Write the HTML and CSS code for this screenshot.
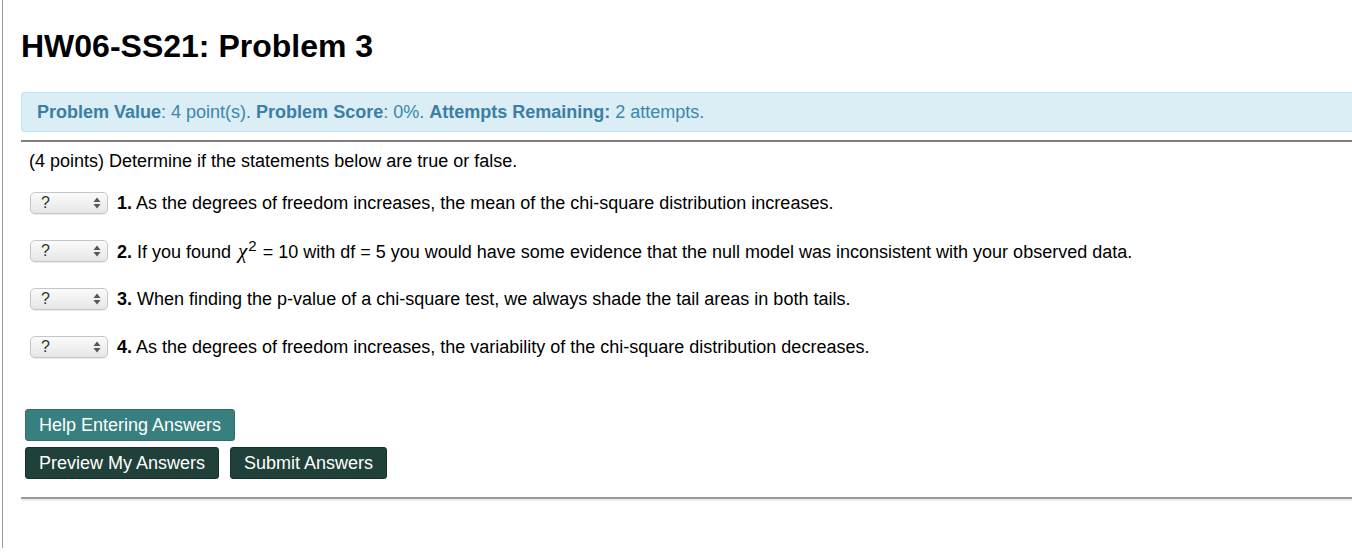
FILE: index.html
```html
<!DOCTYPE html>
<html>
<head>
<meta charset="utf-8">
<link rel="stylesheet" href="styles.css">
</head>
<body>
<div class="page">
  <div class="content">
    <h1 class="title">HW06-SS21: Problem 3</h1>
    <div class="info">
      <b>Problem Value</b>: 4 point(s). <b>Problem Score</b>: 0%. <b>Attempts Remaining:</b> 2 attempts.
    </div>
    <div class="rule"></div>
    <p class="intro">(4 points) Determine if the statements below are true or false.</p>
    <div class="items">
      <div class="item">
        <div class="select"><span class="q">?</span><span class="arrows"><svg width="8" height="12" viewBox="0 0 8 12"><path d="M4 0.5 L7.5 5 H0.5 Z M4 11.5 L7.5 7 H0.5 Z" fill="#555"/></svg></span></div>
        <span class="stmt"><b>1.</b> As the degrees of freedom increases, the mean of the chi-square distribution increases.</span>
      </div>
      <div class="item">
        <div class="select"><span class="q">?</span><span class="arrows"><svg width="8" height="12" viewBox="0 0 8 12"><path d="M4 0.5 L7.5 5 H0.5 Z M4 11.5 L7.5 7 H0.5 Z" fill="#555"/></svg></span></div>
        <span class="stmt"><b>2.</b> If you found <span class="math"><i class="chi">χ</i><sup>2</sup></span> = 10 with df = 5 you would have some evidence that the null model was inconsistent with your observed data.</span>
      </div>
      <div class="item">
        <div class="select"><span class="q">?</span><span class="arrows"><svg width="8" height="12" viewBox="0 0 8 12"><path d="M4 0.5 L7.5 5 H0.5 Z M4 11.5 L7.5 7 H0.5 Z" fill="#555"/></svg></span></div>
        <span class="stmt"><b>3.</b> When finding the p-value of a chi-square test, we always shade the tail areas in both tails.</span>
      </div>
      <div class="item">
        <div class="select"><span class="q">?</span><span class="arrows"><svg width="8" height="12" viewBox="0 0 8 12"><path d="M4 0.5 L7.5 5 H0.5 Z M4 11.5 L7.5 7 H0.5 Z" fill="#555"/></svg></span></div>
        <span class="stmt"><b>4.</b> As the degrees of freedom increases, the variability of the chi-square distribution decreases.</span>
      </div>
    </div>
    <div class="buttons">
      <div class="row"><span class="btn help">Help Entering Answers</span></div>
      <div class="row"><span class="btn dark">Preview My Answers</span><span class="btn dark">Submit Answers</span></div>
    </div>
    <div class="rule2"></div>
  </div>
</div>
</body>
</html>
```
FILE: styles.css
```css
html, body {
  margin: 0;
  padding: 0;
  background: #fff;
}
body {
  font-family: "Liberation Sans", Arial, sans-serif;
  color: #000;
  overflow: hidden;
}
.page {
  width: 1352px;
  height: 560px;
  box-sizing: border-box;
  padding-left: 2px;
}
.content {
  border-left: 1px solid #9a9a9a;
  height: 548px;
  padding-left: 18px;
  box-sizing: border-box;
  padding-top: 28px;
}
.title {
  margin: 0;
  font-size: 32px;
  font-weight: bold;
  line-height: 36px;
  height: 36px;
}
.info {
  margin-top: 28px;
  background: #dbedf5;
  border: 1px solid #bce8f1;
  border-right: none;
  border-radius: 4px 0 0 4px;
  color: #3a87ad;
  font-size: 18px;
  line-height: 18px;
  padding: 10px 0 10px 15px;
}
.info b { color: #3a7fa6; }
.rule {
  margin-top: 8px;
  height: 2px;
  background: #808080;
}
.intro {
  margin: 0;
  padding: 10px 0 0 8px;
  font-size: 18px;
  line-height: 18px;
}
.items {
  padding-left: 9px;
  padding-top: 9px;
}
.item {
  display: flex;
  align-items: center;
  height: 48px;
  font-size: 18px;
}
.select {
  width: 78px;
  height: 22px;
  box-sizing: border-box;
  border: 1px solid #c6c6c6;
  border-radius: 5px;
  background: linear-gradient(#fbfbfb, #e6e6e6);
  box-shadow: 0 1px 1px rgba(0,0,0,0.08);
  display: flex;
  align-items: center;
  justify-content: space-between;
  padding: 0 6px 0 10px;
  margin-right: 9px;
  font-size: 16px;
  color: #333;
}
.arrows { display: flex; align-items: center; }
.stmt { line-height: 18px; }
.math { font-family: "Liberation Serif", "DejaVu Serif", serif; font-size: 21px; margin-left: 2px; margin-right: 1px; }
.chi { font-style: italic; }
.math sup { font-family: "Liberation Sans", Arial, sans-serif; font-size: 15px; vertical-align: 7px; line-height: 0; margin-left: 1px; }
.buttons {
  padding-top: 38px;
  padding-left: 4px;
  display: flex;
  flex-direction: column;
  gap: 6px;
}
.row { display: flex; gap: 11px; }
.btn {
  display: inline-block;
  font-size: 18px;
  line-height: 20px;
  color: #fff;
  padding: 5px 13px 5px 13px;
  border-radius: 3px;
}
.help {
  background: #38807f;
  border: 1px solid #2f6f6e;
}
.dark {
  background: #1f4139;
  border: 1px solid #16302a;
}
.rule2 {
  margin-top: 18px;
  height: 2px;
  background: #999;
  border-bottom: 2px solid #eee;
}
```
